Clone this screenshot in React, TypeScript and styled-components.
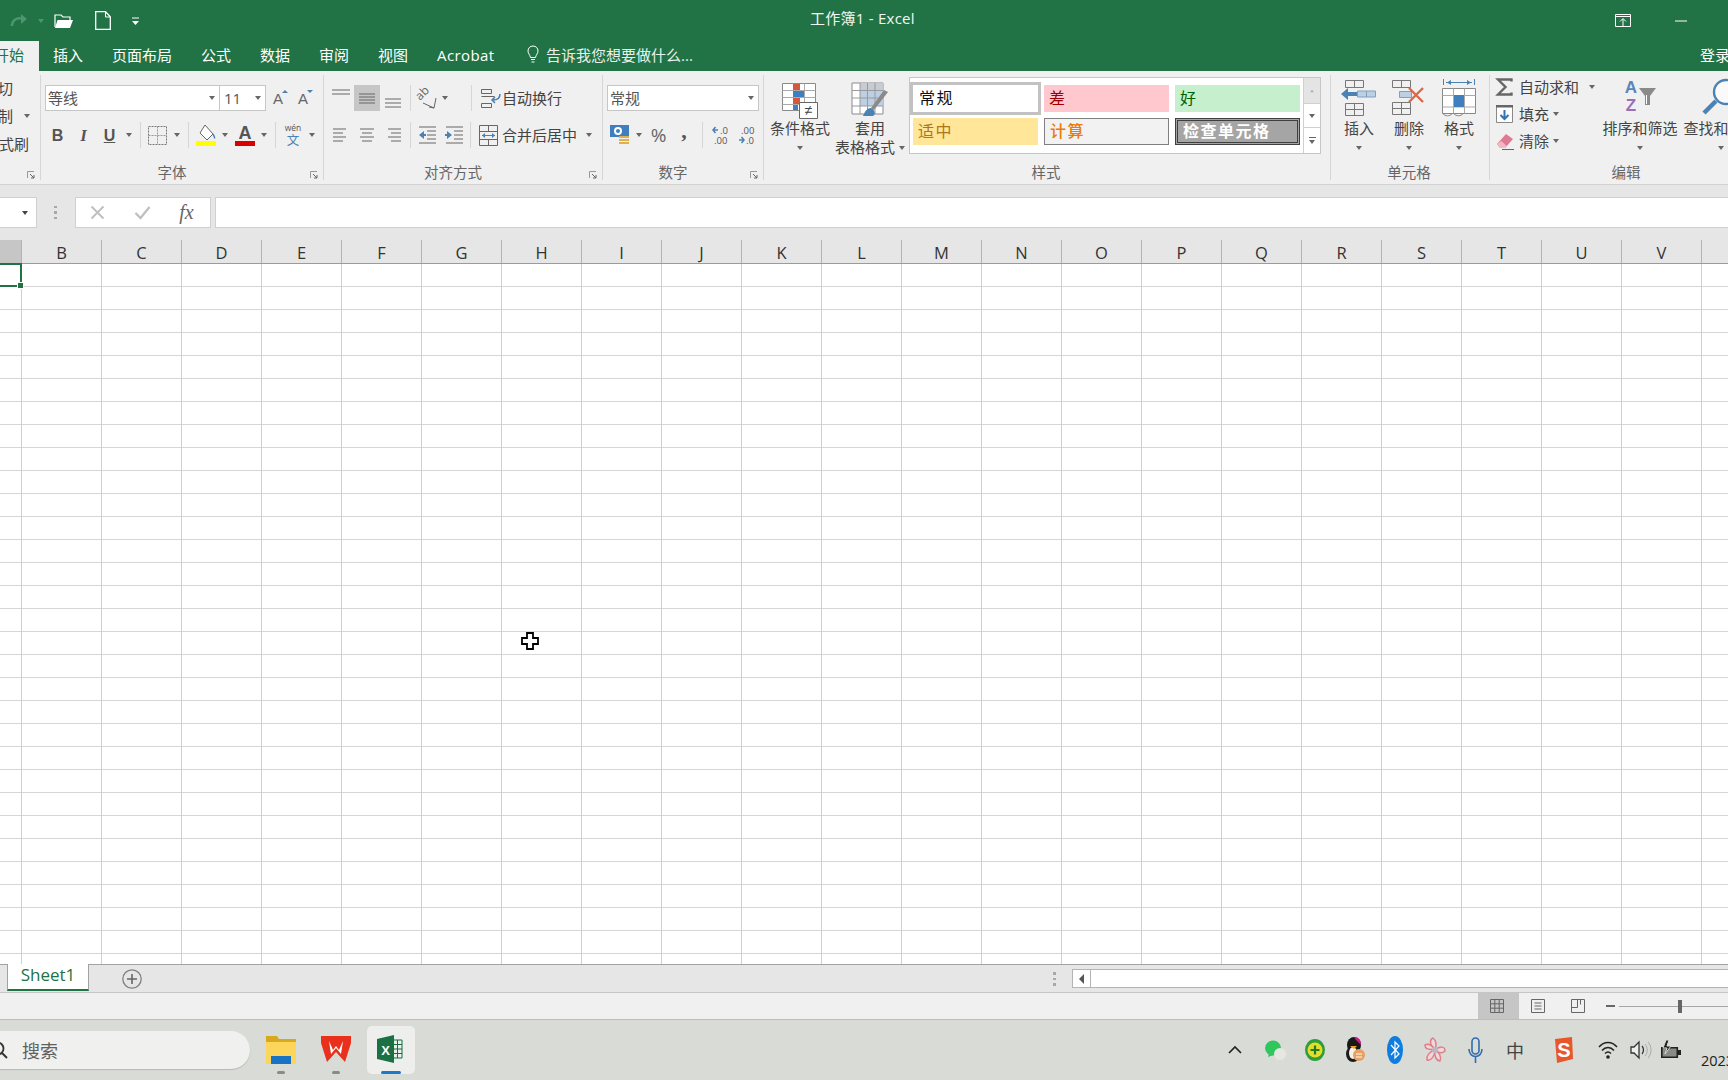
import React from "react";
import styled, { createGlobalStyle } from "styled-components";

const UI_FONT = `"Open Sans", "Noto Sans CJK SC", sans-serif`;
const GREEN = "#217346";
const BLUE = "#4a82b4";

const Global = createGlobalStyle`
  html, body { margin: 0; padding: 0; background: #fff; }
  body { width: 1728px; height: 1080px; overflow: hidden; font-family: ${UI_FONT}; }
`;

/* ── Shell ─────────────────────────────────────────────── */

const Page = styled.div`
  width: 1728px;
  height: 1080px;
  overflow: hidden;
  display: flex;
  flex-direction: column;
`;

const TitleBar = styled.div`
  height: 41px;
  flex: none;
  background: ${GREEN};
  display: flex;
  align-items: center;
  color: #fff;
  position: relative;
`;

const QuickSlot = styled.div<{ $w: number; $ml?: number }>`
  width: ${(p) => p.$w}px;
  margin-left: ${(p) => p.$ml ?? 0}px;
  flex: none;
  display: flex;
  justify-content: center;
  align-items: center;
`;

const WindowTitle = styled.div`
  position: absolute;
  left: 810px;
  top: 8px;
  font-size: 15px;
  line-height: 20px;
  letter-spacing: 0.25px;
  color: #f2f7f4;
`;

const TabStrip = styled.div`
  height: 30px;
  flex: none;
  background: ${GREEN};
  display: flex;
  align-items: stretch;
  color: #fff;
  font-size: 15px;
`;

const Tab = styled.div<{ $active?: boolean }>`
  flex: none;
  padding: 0 14.5px 3px;
  display: flex;
  align-items: center;
  background: ${(p) => (p.$active ? "#f0f0f0" : "transparent")};
  color: ${(p) => (p.$active ? GREEN : "#fff")};
  margin-left: ${(p) => (p.$active ? "-20.5px" : "0")};
`;

const LatinTab = styled(Tab)`
  letter-spacing: 0.4px;
`;

const TellMe = styled.div`
  display: flex;
  align-items: center;
  flex: none;
  gap: 7px;
  margin-left: 18px;
  padding-bottom: 3px;
  width: 165px;
  white-space: nowrap;
  color: #e8f1ec;
`;

const SignIn = styled.div`
  margin-left: 1008px;
  padding-bottom: 3px;
  display: flex;
  align-items: center;
  flex: none;
`;

/* ── Ribbon ─────────────────────────────────────────────── */

const Ribbon = styled.div`
  height: 114px;
  flex: none;
  background: #f0f0f0;
  border-bottom: 1px solid #d2d2d2;
  box-sizing: border-box;
  display: flex;
  padding-top: 4px;
  font-size: 15px;
  color: #444;
  line-height: 19px;
`;

const Group = styled.div<{ $w: number; $line?: boolean }>`
  width: ${(p) => p.$w}px;
  height: 105px;
  flex: none;
  box-sizing: border-box;
  position: relative;
  border-right: ${(p) => (p.$line === false ? "0" : "1px solid #d6d6d6")};
`;

const GroupBody = styled.div<{ $left?: number }>`
  height: 90px;
  padding-left: ${(p) => p.$left ?? 4}px;
  display: flex;
  box-sizing: border-box;
`;

const Stack = styled.div`
  padding-top: 10px;
  display: flex;
  flex-direction: column;
  gap: 11px;
`;

const Row = styled.div`
  height: 26px;
  display: flex;
  align-items: center;
`;

const GroupLabel = styled.div<{ $pad?: number }>`
  height: 16px;
  line-height: 16px;
  text-align: center;
  font-size: 14.5px;
  color: #666;
  padding-right: ${(p) => p.$pad ?? 0}px;
`;

const Launcher = styled.div`
  position: absolute;
  right: 5px;
  bottom: 1px;
  width: 8px;
  height: 8px;
  display: flex;
`;

const Slot = styled.div<{ $w: number; $on?: boolean; $ml?: number }>`
  width: ${(p) => p.$w}px;
  height: 26px;
  flex: none;
  margin-left: ${(p) => p.$ml ?? 0}px;
  display: flex;
  align-items: center;
  justify-content: center;
  background: ${(p) => (p.$on ? "#c6c6c6" : "transparent")};
  color: #444;
`;

const Sep = styled.div<{ $ml: number }>`
  width: 1px;
  height: 26px;
  flex: none;
  margin-left: ${(p) => p.$ml}px;
  background: #d6d6d6;
`;

const Caret = styled.span<{ $ml?: number; $dark?: boolean; $color?: string }>`
  display: inline-block;
  flex: none;
  width: 0;
  height: 0;
  margin-left: ${(p) => p.$ml ?? 0}px;
  border-left: 3.5px solid transparent;
  border-right: 3.5px solid transparent;
  border-top: 4px solid ${(p) => p.$color ?? (p.$dark ? "#444" : "#666")};
`;

const UpCaret = styled(Caret)`
  transform: rotate(180deg) scale(0.6);
`;

const Combo = styled.div<{ $w: number; $noLeft?: boolean }>`
  width: ${(p) => p.$w}px;
  height: 26px;
  flex: none;
  box-sizing: border-box;
  background: #fff;
  border: 1px solid #c6c6c6;
  border-left-width: ${(p) => (p.$noLeft ? 0 : 1)}px;
  display: flex;
  align-items: center;
  justify-content: space-between;
  padding: 0 4px 0 ${(p) => (p.$noLeft ? 4 : 2)}px;
  color: #555;
`;

const IconText = styled.span<{ $ml?: number }>`
  margin-left: ${(p) => p.$ml ?? 0}px;
  white-space: nowrap;
  flex: none;
  display: flex;
`;

const SmallColumn = styled.div`
  display: flex;
  flex-direction: column;
  gap: 3px;
  width: 112px;
  flex: none;
`;

const ClipColumn = styled.div`
  width: 40px;
  flex: none;
  margin-top: -1px;
  display: flex;
  flex-direction: column;
`;

const SmallRow = styled.div`
  height: 24px;
  display: flex;
  align-items: center;
  color: #444;
`;

const ClipText = styled.div<{ $ml: number }>`
  height: 28px;
  display: flex;
  align-items: center;
  margin-left: ${(p) => p.$ml}px;
  white-space: nowrap;
`;

const BigButton = styled.div<{ $w: number; $ml?: number }>`
  width: ${(p) => p.$w}px;
  margin-left: ${(p) => p.$ml ?? 0}px;
  flex: none;
  padding-top: 5px;
  display: flex;
  flex-direction: column;
  align-items: center;
`;

const BigIcon = styled.div`
  height: 36px;
  margin-bottom: 3px;
  display: flex;
  align-items: flex-start;
  justify-content: center;
`;

const BigLine = styled.div`
  height: 19px;
  display: flex;
  align-items: center;
  gap: 4px;
  white-space: nowrap;
`;

const Gallery = styled.div`
  width: 412px;
  height: 77px;
  margin: 2px 0 0 4px;
  flex: none;
  box-sizing: border-box;
  background: #fff;
  border: 1px solid #c6c6c6;
  display: flex;
`;

const GalleryGrid = styled.div`
  flex: none;
  padding: 7px 0 0 3px;
  display: grid;
  grid-template-columns: repeat(3, 125px);
  grid-auto-rows: 27px;
  gap: 6px;
`;

const StyleCell = styled.div<{ $bg: string; $fg: string; $weight?: number; $border?: string; $sel?: boolean }>`
  box-sizing: border-box;
  background: ${(p) => p.$bg};
  color: ${(p) => p.$fg};
  font-size: 16px;
  letter-spacing: 1.5px;
  font-weight: ${(p) => p.$weight ?? 400};
  display: flex;
  align-items: center;
  padding-left: ${(p) => (p.$sel ? 6 : 5)}px;
  border: ${(p) => p.$border ?? "0"};
  box-shadow: ${(p) => (p.$sel ? "0 0 0 3px #c2c2c2" : "none")};
  white-space: nowrap;
  overflow: hidden;
`;

const GalleryScroll = styled.div`
  margin-left: auto;
  width: 16px;
  flex: none;
  display: flex;
  flex-direction: column;
  border-left: 1px solid #d0d0d0;
`;

const ScrollCell = styled.div<{ $h: number; $off?: boolean }>`
  height: ${(p) => p.$h}px;
  flex: none;
  box-sizing: border-box;
  display: flex;
  flex-direction: column;
  align-items: center;
  justify-content: center;
  gap: 2px;
  background: ${(p) => (p.$off ? "#e4e4e4" : "#fff")};
  border-bottom: 1px solid #d0d0d0;
  &:last-child { border-bottom: 0; }
`;

const TinyBar = styled.span`
  width: 7px;
  height: 1px;
  background: #666;
`;

const Bold = styled.b<{ $font?: string; $size?: number; $italic?: boolean; $under?: boolean; $up?: number }>`
  font-family: ${(p) => p.$font ?? "Liberation Sans"};
  font-size: ${(p) => p.$size ?? 16}px;
  font-style: ${(p) => (p.$italic ? "italic" : "normal")};
  text-decoration: ${(p) => (p.$under ? "underline" : "none")};
  margin-top: ${(p) => -(p.$up ?? 0)}px;
  color: #555;
`;

const Percent = styled.span`
  font-size: 19px;
  color: #666;
`;

/* ── Formula bar and sheet ─────────────────────────────── */

const FormulaBand = styled.div`
  height: 55px;
  flex: none;
  background: #e6e6e6;
  display: flex;
  align-items: center;
`;

const FormulaBox = styled.div<{ $w?: number }>`
  height: 31px;
  box-sizing: border-box;
  width: ${(p) => (p.$w ? `${p.$w}px` : "auto")};
  flex: ${(p) => (p.$w ? "none" : "1")};
  background: #fff;
  border: 1px solid #d0d0d0;
  display: flex;
  align-items: center;
`;

const NameBox = styled(FormulaBox)`
  margin-left: -1px;
  justify-content: flex-end;
  padding-right: 8px;
`;

const FormulaInput = styled(FormulaBox)`
  margin-left: 4px;
  border-right: 0;
`;

const FxMark = styled.i`
  font-family: "Liberation Serif";
  font-size: 20px;
  color: #666;
`;

const GripDots = styled.div<{ $ml: number; $mr: number; $mt?: number }>`
  flex: none;
  margin: ${(p) => p.$mt ?? 0}px ${(p) => p.$mr}px 0 ${(p) => p.$ml}px;
  display: flex;
  flex-direction: column;
  gap: 3px;
  span {
    width: 2.5px;
    height: 2.5px;
    background: #a8a8a8;
  }
`;

const ColumnHeader = styled.div`
  height: 23px;
  flex: none;
  background: #e6e6e6;
  border-bottom: 1px solid #9b9b9b;
  display: flex;
`;

const ColHead = styled.div<{ $w: number; $sel?: boolean }>`
  width: ${(p) => p.$w}px;
  flex: none;
  box-sizing: border-box;
  border-right: 1px solid #b4b4b4;
  background: ${(p) => (p.$sel ? "#c6c6c6" : "transparent")};
  display: flex;
  align-items: center;
  justify-content: center;
  padding-top: 1px;
  font-size: 16.5px;
  color: #333;
`;

const SheetArea = styled.div`
  height: 700px;
  flex: none;
  position: relative;
  background-color: #fff;
  background-image:
    repeating-linear-gradient(to right, transparent 0 79px, #cfcfcf 79px 80px),
    repeating-linear-gradient(to bottom, transparent 0 22px, #d6d6d6 22px 23px);
  background-position: -58px 0, 0 0;
  background-size: calc(100% + 80px) 100%, 100% 100%;
  background-repeat: no-repeat;
`;

const CellCursor = styled.div`
  position: absolute;
  left: -3px;
  top: -1px;
  width: 25px;
  height: 24px;
  box-sizing: border-box;
  border: 2px solid ${GREEN};
  &::after {
    content: "";
    position: absolute;
    right: -4px;
    bottom: -4px;
    width: 5px;
    height: 5px;
    background: ${GREEN};
    border: 1px solid #fff;
  }
`;

const MouseCursor = styled.div`
  position: absolute;
  left: 521px;
  top: 368px;
  display: flex;
`;

/* ── Bottom bars ───────────────────────────────────────── */

const TabBar = styled.div`
  height: 29px;
  flex: none;
  box-sizing: border-box;
  background: #e6e6e6;
  border-top: 1px solid #a2a2a2;
  border-bottom: 1px solid #c6c6c6;
  display: flex;
  align-items: flex-start;
`;

const SheetTab = styled.div`
  margin-left: 7px;
  margin-top: -1px;
  width: 82px;
  height: 27px;
  flex: none;
  box-sizing: border-box;
  background: #fff;
  border: 1px solid #a2a2a2;
  border-top: 0;
  border-bottom: 2px solid ${GREEN};
  color: ${GREEN};
  font-size: 17px;
  line-height: 22px;
  text-align: center;
`;

const AddSheet = styled.div`
  margin: 4px 0 0 33px;
  flex: none;
  display: flex;
`;

const ScrollTrack = styled.div`
  margin: 4px 0 0 16px;
  flex: 1;
  height: 19px;
  box-sizing: border-box;
  background: #fff;
  border: 1px solid #b4b4b4;
  border-right: 0;
  display: flex;
`;

const ScrollLeft = styled.div`
  width: 18px;
  flex: none;
  box-sizing: border-box;
  border-right: 1px solid #b4b4b4;
  display: flex;
  align-items: center;
  justify-content: center;
  &::before {
    content: "";
    border-top: 5px solid transparent;
    border-bottom: 5px solid transparent;
    border-right: 5px solid #555;
  }
`;

const StatusBar = styled.div`
  height: 27px;
  flex: none;
  box-sizing: border-box;
  background: #f0f0f0;
  border-bottom: 1px solid #bdbdbd;
  display: flex;
  padding-left: 1478px;
`;

const ViewButton = styled.div<{ $on?: boolean }>`
  width: 40.5px;
  padding-right: 2px;
  box-sizing: border-box;
  flex: none;
  display: flex;
  align-items: center;
  justify-content: center;
  background: ${(p) => (p.$on ? "#c6c6c6" : "transparent")};
`;

const ZoomMinus = styled.div`
  width: 9px;
  height: 2px;
  flex: none;
  background: #666;
  align-self: center;
  margin-left: 6px;
`;

const ZoomTrack = styled.div`
  flex: 1;
  height: 1px;
  align-self: center;
  margin-left: 4px;
  background: #a6a6a6;
  position: relative;
`;

const ZoomThumb = styled.div`
  position: absolute;
  left: 59px;
  top: -6px;
  width: 4px;
  height: 13px;
  background: #666;
`;

const Taskbar = styled.div`
  height: 60px;
  flex: none;
  background: #d9dbd6;
  display: flex;
  align-items: flex-start;
  padding-top: 6px;
  box-sizing: border-box;
`;

const SearchPill = styled.div`
  margin: 5px 0 0 -20px;
  width: 270px;
  height: 38px;
  flex: none;
  box-sizing: border-box;
  background: #f0f0ee;
  border-radius: 19px;
  box-shadow: 0 1px 1px #b8b8b4;
  display: flex;
  align-items: center;
  padding-left: 10px;
  font-size: 18px;
  color: #5f5f5f;
  gap: 14px;
`;

const DockSlot = styled.div<{ $on?: boolean }>`
  width: 48px;
  height: 48px;
  flex: none;
  margin-left: 7px;
  border-radius: 5px;
  background: ${(p) => (p.$on ? "#eeeeec" : "transparent")};
  display: flex;
  align-items: center;
  justify-content: center;
  position: relative;
  padding-bottom: 2px;
  box-sizing: border-box;
`;

const DockMark = styled.span<{ $on?: boolean }>`
  position: absolute;
  left: 50%;
  bottom: 0;
  width: ${(p) => (p.$on ? 20 : 8)}px;
  height: 3.5px;
  margin-left: ${(p) => (p.$on ? -10 : -4)}px;
  border-radius: 2px;
  background: ${(p) => (p.$on ? "#1c78c8" : "#8a8a8a")};
`;

const Tray = styled.div`
  margin-left: 800px;
  display: flex;
  flex: none;
  height: 48px;
  align-items: center;
`;

const TraySlot = styled.div<{ $w?: number }>`
  width: ${(p) => p.$w ?? 40}px;
  flex: none;
  display: flex;
  align-items: center;
  justify-content: center;
`;

const ImeMark = styled.span`
  font-size: 18px;
  color: #444;
`;

const ClockDate = styled.div`
  margin: 20px 0 0 14px;
  flex: none;
  font-size: 14.5px;
  color: #222;
  white-space: nowrap;
`;

/* ── Icons ─────────────────────────────────────────────── */

const SvgBox = styled.svg`
  flex: none;
  overflow: visible;
`;

const Svg = ({ w, h, children }: { w: number; h: number; children: React.ReactNode }) => (
  <SvgBox width={w} height={h} viewBox={`0 0 ${w} ${h}`} fill="none">
    {children}
  </SvgBox>
);

const Lines = ({ rows }: { rows: [number, number, number][] }) => (
  <Svg w={20} h={20}>
    {rows.map(([x1, x2, y], i) => (
      <path key={i} d={`M${x1} ${y}H${x2}`} stroke="#666" />
    ))}
  </Svg>
);

const LauncherIcon = () => (
  <Launcher>
    <Svg w={8} h={8}>
      <path d="M.5 7V.5H7" stroke="#999" />
      <path d="M3 3l4 4M7 4v3H4" stroke="#666" />
    </Svg>
  </Launcher>
);

const CondIcon = () => (
  <Svg w={38} h={36}>
    <path d="M1.500 3.500h33v27h-33z" stroke="#8a8a8a" fill="#fff" />
    <path d="M12.500 3.500v27M23.500 3.500v27M1.500 10.500h33M1.500 17.500h33M1.500 24.500h33" stroke="#aaa" />
    <path d="M12 4h7v6h-7zM12 18h7v6h-7z" fill="#d6583c" />
    <path d="M12 11h11v6H12zM12 25h5v5h-5z" fill="#3f7fbf" />
    <path d="M18.500 22.500h18v16h-18z" stroke="#666" fill="#fff" />
    <text x="27.500" y="35" fontSize="14" fontFamily="Liberation Sans" fill="#444" textAnchor="middle" fontStyle="italic">≠</text>
  </Svg>
);

const TableIcon = () => (
  <Svg w={38} h={36}>
    <path d="M1 3h31v31H1z" fill="#fff" stroke="#8a8a8a" />
    <path d="M9 3h23v7H9z" fill="#c5ccd4" />
    <path d="M9 10h23v16H9z" fill="#bccfe3" />
    <path d="M9 3v31M16.500 3v31M24 3v31M1 10.500h31M1 18h31M1 26h31" stroke="#9a9a9a" />
    <path d="M37 12L23 30l-3-2L33 10z" fill="#8a8a8a" />
    <path d="M20 28c-4 0-6 3-8 8h10c3-2 2-6-2-8z" fill={BLUE} />
  </Svg>
);

const InsertIcon = () => (
  <Svg w={38} h={36}>
    <path d="M5.500.500h18v7h-18zM14.500.500v7M5.500 23.500h18v12h-18zM14.500 23.500v12M5.500 29.500h18" stroke="#777" />
    <path d="M17.500 11h18v6h-18z" fill="#bcd0e4" stroke="#7f9fc0" />
    <path d="M26.500 11v6" stroke="#7f9fc0" />
    <path d="M1 14l7-6v4h9v4H8v4z" fill={BLUE} />
  </Svg>
);

const DeleteIcon = () => (
  <Svg w={38} h={36}>
    <path d="M2.500.500h18v7h-18zM11.500.500v7M2.500 22.500h18v12h-18zM11.500 22.500v12M2.500 28.500h18" stroke="#777" />
    <path d="M9.500 11.500h12v6h-12z" fill="#bcd0e4" stroke="#7f9fc0" />
    <path d="M19 8l14 14M33 8L19 22" stroke="#d9694a" strokeWidth="2.400" />
  </Svg>
);

const FormatIcon = () => (
  <Svg w={38} h={38}>
    <path d="M3.500-1v6M34.500-1v6M6 2.500h26" stroke={BLUE} />
    <path d="M7 2.500l4-2.500v5zM31 2.500l-4-2.500v5z" fill={BLUE} />
    <path d="M2.500 8.500h33v25h-33z" fill="#fff" stroke="#888" />
    <path d="M13.500 8.500v25M24.500 8.500v25M2.500 15.500h33M2.500 27h33" stroke="#aaa" />
    <path d="M14 15h10v12H14z" fill="#3f7fbf" />
    <path d="M2.500 33.500c3 3 7 3 10 0M13.500 33.500c3 3 7 3 10 0" stroke="#888" />
  </Svg>
);

const SortIcon = () => (
  <Svg w={38} h={36}>
    <text x="10" y="13" fontSize="17" fontWeight="700" fontFamily="Liberation Sans" fill="#5a86bd" textAnchor="middle">A</text>
    <text x="10" y="31" fontSize="17" fontWeight="700" fontFamily="Liberation Sans" fill="#9a6fb8" textAnchor="middle">Z</text>
    <path d="M18 8h17l-6 8v9h-5v-9z" fill="#8a8a8a" />
    <path d="M25.500 15v9" stroke="#fff" />
  </Svg>
);

const FindIcon = () => (
  <Svg w={38} h={36}>
    <circle cx="24" cy="12" r="12" fill="#fafafa" stroke={BLUE} strokeWidth="2.400" />
    <path d="M2 33l12-12" stroke={BLUE} strokeWidth="4.500" />
  </Svg>
);

const BorderIcon = () => (
  <Svg w={19} h={19}>
    <path d="M.5.500h18v18H.5z" stroke="#777" strokeDasharray="2 1" />
    <path d="M9.500.500v18M.5 9.500h18" stroke="#999" strokeDasharray="2 1" />
  </Svg>
);

/* ── Data ──────────────────────────────────────────────── */

const COLUMNS = "BCDEFGHIJKLMNOPQRSTUVW".split("");

const BigCaretLine = () => (
  <BigLine>
    <Caret />
  </BigLine>
);

export default function App() {
  return (
    <Page>
      <Global />
      <TitleBar>
        <QuickSlot $w={38}>
          <Svg w={20} h={18}>
            <path d="M3 14c0-6 5-9 12-7" stroke="#4f9470" strokeWidth="2.500" />
            <path d="M12 2l6 5-6 5z" fill="#4f9470" />
          </Svg>
        </QuickSlot>
        <QuickSlot $w={5}>
          <Caret $color="#4f9470" />
        </QuickSlot>
        <QuickSlot $w={42}>
          <Svg w={20} h={17}>
            <path d="M1 15V3h6l2 2h7v3" stroke="#fff" strokeWidth="1.200" />
            <path d="M3.500 8H19l-3 8H1z" fill="#fff" />
          </Svg>
        </QuickSlot>
        <QuickSlot $w={35}>
          <Svg w={16} h={19}>
            <path d="M.7.700h9.800l4.800 5v12.600H.7z" stroke="#fff" strokeWidth="1.300" />
            <path d="M10.500 1v5h4.800" stroke="#fff" />
          </Svg>
        </QuickSlot>
        <QuickSlot $w={30}>
          <Svg w={7} h={8}>
            <path d="M0 1h7" stroke="#fff" />
            <path d="M0 4h7L3.500 8z" fill="#fff" />
          </Svg>
        </QuickSlot>
        <QuickSlot $w={16} $ml={1465}>
          <Svg w={16} h={13}>
            <path d="M.5.500h15v12H.5zM.5 2.500h15" stroke="#fff" />
            <path d="M8 12V5M5 7.500L8 4.500l3 3" stroke="#fff" />
          </Svg>
        </QuickSlot>
        <QuickSlot $w={12} $ml={44}>
          <Svg w={12} h={2}>
            <path d="M0 1h12" stroke="#fff" />
          </Svg>
        </QuickSlot>
        <WindowTitle>工作簿1 - Excel</WindowTitle>
      </TitleBar>

      <TabStrip>
        <Tab $active>开始</Tab>
        <Tab>插入</Tab>
        <Tab>页面布局</Tab>
        <Tab>公式</Tab>
        <Tab>数据</Tab>
        <Tab>审阅</Tab>
        <Tab>视图</Tab>
        <LatinTab>Acrobat</LatinTab>
        <TellMe>
          <Svg w={12} h={19}>
            <path d="M6 1C3 1 1 3.200 1 6c0 2.500 2 3.800 2.500 6.500h5C9 9.800 11 8.500 11 6c0-2.800-2-5-5-5z" stroke="#fff" />
            <path d="M4 14.500h4M4.500 17h3" stroke="#fff" />
          </Svg>
          告诉我您想要做什么...
        </TellMe>
        <SignIn>登录</SignIn>
      </TabStrip>

      <Ribbon>
        <Group $w={41}>
          <GroupBody $left={0}>
            <ClipColumn>
              <ClipText $ml={-2}>切</ClipText>
              <ClipText $ml={-2}>
                制<Caret $ml={11} />
              </ClipText>
              <ClipText $ml={-16}>格式刷</ClipText>
            </ClipColumn>
          </GroupBody>
          <LauncherIcon />
        </Group>

        <Group $w={283}>
          <GroupBody>
            <Stack>
              <Row>
                <Combo $w={175}>
                  等线
                  <Caret />
                </Combo>
                <Combo $w={46} $noLeft>
                  11
                  <Caret />
                </Combo>
                <Slot $w={28}>
                  <Svg w={16} h={18}>
                    <text x="6" y="15" fontSize="15" fontFamily="Liberation Sans" fill="#666" textAnchor="middle">A</text>
                    <path d="M10 4l3-3 3 3z" fill={BLUE} />
                  </Svg>
                </Slot>
                <Slot $w={22}>
                  <Svg w={16} h={18}>
                    <text x="6" y="15" fontSize="15" fontFamily="Liberation Sans" fill="#666" textAnchor="middle">A</text>
                    <path d="M10 1l3 3 3-3z" fill={BLUE} />
                  </Svg>
                </Slot>
              </Row>
              <Row>
                <Slot $w={25}>
                  <Bold>B</Bold>
                </Slot>
                <Slot $w={27}>
                  <Bold $font="Liberation Serif" $size={17} $italic>I</Bold>
                </Slot>
                <Slot $w={25}>
                  <Bold $under>U</Bold>
                </Slot>
                <Slot $w={14}>
                  <Caret />
                </Slot>
                <Sep $ml={4} />
                <Slot $w={32}>
                  <BorderIcon />
                </Slot>
                <Slot $w={8}>
                  <Caret />
                </Slot>
                <Sep $ml={7} />
                <Slot $w={33}>
                  <Svg w={20} h={23}>
                    <path d="M9 1l8 9-6 6-7-7z" stroke="#666" fill="#fff" />
                    <path d="M17 10c1 2 2 3 1.500 4.500" stroke={BLUE} strokeWidth="1.500" />
                    <path d="M0 17h20v5H0z" fill="#ffff00" />
                  </Svg>
                </Slot>
                <Slot $w={6}>
                  <Caret />
                </Slot>
                <Slot $w={34}>
                  <Svg w={20} h={23}>
                    <text x="10" y="15" fontSize="18" fontWeight="700" fontFamily="Liberation Sans" fill="#555" textAnchor="middle">A</text>
                    <path d="M0 17h20v5H0z" fill="#d90000" />
                  </Svg>
                </Slot>
                <Slot $w={4}>
                  <Caret />
                </Slot>
                <Sep $ml={9} />
                <Slot $w={33}>
                  <Svg w={18} h={22}>
                    <text x="9" y="7" fontSize="8.500" fontFamily="Open Sans" fill="#555" textAnchor="middle">wén</text>
                    <text x="9" y="21" fontSize="12.500" fontFamily="Noto Sans CJK SC" fill={BLUE} textAnchor="middle">文</text>
                  </Svg>
                </Slot>
                <Slot $w={6}>
                  <Caret />
                </Slot>
              </Row>
            </Stack>
          </GroupBody>
          <GroupLabel $pad={20}>字体</GroupLabel>
          <LauncherIcon />
        </Group>

        <Group $w={279}>
          <GroupBody>
            <Stack>
              <Row>
                <Slot $w={26}>
                  <Lines rows={[[1, 19, 2], [1, 19, 6]]} />
                </Slot>
                <Slot $w={26} $on>
                  <Lines rows={[[2, 18, 6], [2, 18, 9], [2, 18, 12], [2, 18, 15]]} />
                </Slot>
                <Slot $w={26}>
                  <Lines rows={[[2, 18, 11], [2, 18, 15], [2, 18, 19]]} />
                </Slot>
                <Sep $ml={4} />
                <Slot $w={32}>
                  <Svg w={20} h={20}>
                    <text x="0" y="0" transform="translate(3 13) rotate(-45)" fontSize="12" fontFamily="Open Sans" fill="#666">ab</text>
                    <path d="M6 15l11 5M19 10l-2 10-5-1" stroke="#666" />
                  </Svg>
                </Slot>
                <Slot $w={4}>
                  <Caret />
                </Slot>
                <Sep $ml={24} />
                <IconText $ml={9}>
                  <Svg w={20} h={19}>
                    <path d="M.5.500h10v4H.5zM.5 14.500h10v4H.5zM.5 7.500h13" stroke="#666" />
                    <path d="M19 5c0 5-3 6-7 6M14 8l-3 3 3 3" stroke={BLUE} strokeWidth="1.500" />
                  </Svg>
                </IconText>
                <IconText $ml={1}>自动换行</IconText>
              </Row>
              <Row>
                <Slot $w={26}>
                  <Lines rows={[[2, 15, 4], [2, 12, 8], [2, 15, 12], [2, 12, 16]]} />
                </Slot>
                <Slot $w={26}>
                  <Lines rows={[[3, 17, 4], [5, 15, 8], [3, 17, 12], [5, 15, 16]]} />
                </Slot>
                <Slot $w={26}>
                  <Lines rows={[[5, 18, 4], [8, 18, 8], [5, 18, 12], [8, 18, 16]]} />
                </Slot>
                <Sep $ml={4} />
                <Slot $w={30} $ml={1}>
                  <Svg w={19} h={19}>
                    <path d="M1 1h17M9 5h9M9 9h9M9 13h9M1 17h17" stroke="#666" />
                    <path d="M1 9l5-4v3h2v2H6v3z" fill={BLUE} />
                  </Svg>
                </Slot>
                <Slot $w={24}>
                  <Svg w={19} h={19}>
                    <path d="M1 1h17M9 5h9M9 9h9M9 13h9M1 17h17" stroke="#666" />
                    <path d="M7 9L2 5v3H0v2h2v3z" fill={BLUE} />
                  </Svg>
                </Slot>
                <Sep $ml={4} />
                <IconText $ml={8}>
                  <Svg w={20} h={21}>
                    <path d="M.5.500h18v20H.5zM.5 6.500h18M.5 14.500h18M9.500.500v6M9.500 14.500v6" stroke="#666" />
                    <path d="M3 10.500h13" stroke={BLUE} />
                    <path d="M6 8l-3 2.500L6 13zM13 8l3 2.500L13 13z" fill={BLUE} />
                  </Svg>
                </IconText>
                <IconText $ml={3}>合并后居中</IconText>
                <Caret $ml={9} />
              </Row>
            </Stack>
          </GroupBody>
          <GroupLabel $pad={20}>对齐方式</GroupLabel>
          <LauncherIcon />
        </Group>

        <Group $w={161}>
          <GroupBody>
            <Stack>
              <Row>
                <Combo $w={152}>
                  常规
                  <Caret />
                </Combo>
              </Row>
              <Row>
                <Slot $w={25}>
                  <Svg w={20} h={20}>
                    <path d="M0 0h19v12H0z" fill="#3f7fbf" />
                    <circle cx="8" cy="6" r="4" fill="#fff" />
                    <circle cx="8" cy="6" r="2" fill="#3f7fbf" />
                    <path d="M9 12h10M9 15h10M9 18h10" stroke="#e0b050" strokeWidth="2" />
                  </Svg>
                </Slot>
                <Slot $w={14}>
                  <Caret />
                </Slot>
                <Slot $w={25}>
                  <Percent>%</Percent>
                </Slot>
                <Slot $w={26}>
                  <Bold $font="Liberation Serif" $size={22} $up={10}>,</Bold>
                </Slot>
                <Sep $ml={5} />
                <Slot $w={34}>
                  <Svg w={17} h={20}>
                    <path d="M6 5H1m2.500-3L1 5l2.500 3" stroke={BLUE} strokeWidth="1.500" />
                    <text x="8" y="9" fontSize="9.500" fontFamily="Open Sans" fill="#555">.0</text>
                    <text x="2" y="19" fontSize="9.500" fontFamily="Open Sans" fill="#555">.00</text>
                  </Svg>
                </Slot>
                <Slot $w={18}>
                  <Svg w={17} h={20}>
                    <text x="3" y="9" fontSize="9.500" fontFamily="Open Sans" fill="#555">.00</text>
                    <path d="M1 15h5m-2.500-3L6 15l-2.500 3" stroke={BLUE} strokeWidth="1.500" />
                    <text x="8" y="19" fontSize="9.500" fontFamily="Open Sans" fill="#555">.0</text>
                  </Svg>
                </Slot>
              </Row>
            </Stack>
          </GroupBody>
          <GroupLabel $pad={20}>数字</GroupLabel>
          <LauncherIcon />
        </Group>

        <Group $w={567}>
          <GroupBody $left={1}>
            <BigButton $w={70}>
              <BigIcon>
                <CondIcon />
              </BigIcon>
              <BigLine>条件格式</BigLine>
              <BigCaretLine />
            </BigButton>
            <BigButton $w={70}>
              <BigIcon>
                <TableIcon />
              </BigIcon>
              <BigLine>套用</BigLine>
              <BigLine>
                表格格式
                <Caret />
              </BigLine>
            </BigButton>
            <Gallery>
              <GalleryGrid>
                <StyleCell $bg="#fff" $fg="#111" $sel>常规</StyleCell>
                <StyleCell $bg="#ffc7ce" $fg="#9c0006">差</StyleCell>
                <StyleCell $bg="#c6efce" $fg="#006100">好</StyleCell>
                <StyleCell $bg="#ffe699" $fg="#b0761a">适中</StyleCell>
                <StyleCell $bg="#f2f2f2" $fg="#ec7a06" $weight={500} $border="1px solid #7f7f7f">计算</StyleCell>
                <StyleCell $bg="#a5a5a5" $fg="#fff" $weight={700} $border="3px double #3f3f3f">检查单元格</StyleCell>
              </GalleryGrid>
              <GalleryScroll>
                <ScrollCell $h={26} $off>
                  <UpCaret $color="#aaa" />
                </ScrollCell>
                <ScrollCell $h={24}>
                  <Caret />
                </ScrollCell>
                <ScrollCell $h={25}>
                  <TinyBar />
                  <Caret />
                </ScrollCell>
              </GalleryScroll>
            </Gallery>
          </GroupBody>
          <GroupLabel $pad={2}>样式</GroupLabel>
        </Group>

        <Group $w={159}>
          <GroupBody $left={3}>
            <BigButton $w={50}>
              <BigIcon>
                <InsertIcon />
              </BigIcon>
              <BigLine>插入</BigLine>
              <BigCaretLine />
            </BigButton>
            <BigButton $w={50}>
              <BigIcon>
                <DeleteIcon />
              </BigIcon>
              <BigLine>删除</BigLine>
              <BigCaretLine />
            </BigButton>
            <BigButton $w={50}>
              <BigIcon>
                <FormatIcon />
              </BigIcon>
              <BigLine>格式</BigLine>
              <BigCaretLine />
            </BigButton>
          </GroupBody>
          <GroupLabel $pad={2}>单元格</GroupLabel>
        </Group>

        <Group $w={290} $line={false}>
          <GroupBody $left={0}>
            <SmallColumn>
              <SmallRow>
                <Slot $w={29}>
                  <Svg w={18} h={18}>
                    <path d="M15.500 3.500V1.500H2l7.500 7.500L2 16.500h13.500v-2" stroke="#666" strokeWidth="2.400" />
                  </Svg>
                </Slot>
                <IconText>自动求和</IconText>
                <Caret $ml={10} />
              </SmallRow>
              <SmallRow>
                <Slot $w={29}>
                  <Svg w={17} h={18}>
                    <path d="M.5.500h16v17H.5z" stroke="#888" fill="#fff" />
                    <path d="M0 0h17v2.500H0z" fill="#666" />
                    <path d="M8.500 5v9M4.500 10l4 4 4-4" stroke="#2f75b5" strokeWidth="2" />
                  </Svg>
                </Slot>
                <IconText>填充</IconText>
                <Caret $ml={4} />
              </SmallRow>
              <SmallRow>
                <Slot $w={29}>
                  <Svg w={18} h={17}>
                    <path d="M1 11l9-10 7 5-8 9H4z" fill="#e07a94" />
                    <path d="M1 11l3 4h5l1.500-2-5-5z" fill="#f3b7c4" />
                    <path d="M6 16.500h12" stroke="#666" />
                  </Svg>
                </Slot>
                <IconText>清除</IconText>
                <Caret $ml={4} />
              </SmallRow>
            </SmallColumn>
            <BigButton $w={78} $ml={-1}>
              <BigIcon>
                <SortIcon />
              </BigIcon>
              <BigLine>排序和筛选</BigLine>
              <BigCaretLine />
            </BigButton>
            <BigButton $w={78} $ml={3}>
              <BigIcon>
                <FindIcon />
              </BigIcon>
              <BigLine>查找和选择</BigLine>
              <BigCaretLine />
            </BigButton>
          </GroupBody>
          <GroupLabel $pad={18}>编辑</GroupLabel>
        </Group>
      </Ribbon>

      <FormulaBand>
        <NameBox $w={38}>
          <Caret $dark />
        </NameBox>
        <GripDots $ml={17} $mr={18}>
          <span />
          <span />
          <span />
        </GripDots>
        <FormulaBox $w={136}>
          <QuickSlot $w={44}>
            <Svg w={15} h={15}>
              <path d="M1.500 1.500l12 12M13.500 1.500l-12 12" stroke="#c0c0c0" strokeWidth="2" />
            </Svg>
          </QuickSlot>
          <QuickSlot $w={46}>
            <Svg w={17} h={15}>
              <path d="M1.500 8l5 5 9-11" stroke="#c0c0c0" strokeWidth="2.400" />
            </Svg>
          </QuickSlot>
          <QuickSlot $w={42}>
            <FxMark>fx</FxMark>
          </QuickSlot>
        </FormulaBox>
        <FormulaInput />
      </FormulaBand>

      <ColumnHeader>
        <ColHead $w={22} $sel />
        {COLUMNS.map((c) => (
          <ColHead key={c} $w={80}>
            {c}
          </ColHead>
        ))}
      </ColumnHeader>

      <SheetArea>
        <CellCursor />
        <MouseCursor>
          <Svg w={18} h={18}>
            <path d="M6 1h6v5h5v6h-5v5H6v-5H1V6h5z" fill="#fff" stroke="#000" strokeWidth="1.800" />
          </Svg>
        </MouseCursor>
      </SheetArea>

      <TabBar>
        <SheetTab>Sheet1</SheetTab>
        <AddSheet>
          <Svg w={20} h={20}>
            <circle cx="10" cy="10" r="9.200" stroke="#808080" strokeWidth="1.300" />
            <path d="M10 5v10M5 10h10" stroke="#666" strokeWidth="1.600" />
          </Svg>
        </AddSheet>
        <GripDots $ml={911} $mr={0} $mt={7}>
          <span />
          <span />
          <span />
        </GripDots>
        <ScrollTrack>
          <ScrollLeft />
        </ScrollTrack>
      </TabBar>

      <StatusBar>
        <ViewButton $on>
          <Svg w={14} h={14}>
            <path d="M.5.500h13v13H.5zM4.800.500v13M9.200.500v13M.5 4.800h13M.5 9.200h13" stroke="#666" />
          </Svg>
        </ViewButton>
        <ViewButton>
          <Svg w={14} h={14}>
            <path d="M.5.500h13v13H.5zM3.500 4h7M3.500 7h7M3.500 10h7" stroke="#666" />
          </Svg>
        </ViewButton>
        <ViewButton>
          <Svg w={14} h={14}>
            <path d="M.5.500h13v13H.5zM.5 8.500h6v-8M9.500.500v5" stroke="#666" />
          </Svg>
        </ViewButton>
        <ZoomMinus />
        <ZoomTrack>
          <ZoomThumb />
        </ZoomTrack>
      </StatusBar>

      <Taskbar>
        <SearchPill>
          <Svg w={18} h={18}>
            <circle cx="7.500" cy="7.500" r="6" stroke="#333" strokeWidth="1.800" />
            <path d="M12 12l5 5" stroke="#333" strokeWidth="2" />
          </Svg>
          搜索
        </SearchPill>
        <DockSlot>
          <Svg w={30} h={29}>
            <path d="M0 1h11l2 3h17v25H0z" fill="#d8a91e" />
            <path d="M0 7h30v22H0z" fill="#fcd65a" />
            <path d="M5 21h20v8H5z" fill="#1773c4" />
          </Svg>
          <DockMark />
        </DockSlot>
        <DockSlot>
          <Svg w={30} h={27}>
            <path d="M0 0h30v7l-6 19-9-10-9 10L0 7z" fill="#e8301c" />
            <path d="M8 5l4 9 3-4 3 4 4-9-2 13-5-6-5 6z" fill="#fff" />
          </Svg>
          <DockMark />
        </DockSlot>
        <DockSlot $on>
          <Svg w={28} h={28}>
            <path d="M14 0h12v28H14z" fill="#e9f1ec" />
            <path d="M16 5h9v18h-9zM16 9.500h9M16 14h9M16 18.500h9M20.500 5v18" stroke="#1a6b3f" />
            <path d="M0 4l17-4v28L0 24z" fill="#1b7143" />
            <text x="8.500" y="20" fontSize="13" fontWeight="700" fontFamily="Liberation Sans" fill="#fff" textAnchor="middle">X</text>
          </Svg>
          <DockMark $on />
        </DockSlot>
        <Tray>
          <TraySlot>
            <Svg w={14} h={8}>
              <path d="M1 7l6-6 6 6" stroke="#222" strokeWidth="1.600" />
            </Svg>
          </TraySlot>
          <TraySlot>
            <Svg w={21} h={20}>
              <ellipse cx="8" cy="8" rx="8" ry="7.500" fill="#2fc75d" />
              <path d="M4 13l-1 4 5-2z" fill="#2fc75d" />
              <circle cx="15" cy="14" r="6" fill="#e6e6e2" />
            </Svg>
          </TraySlot>
          <TraySlot>
            <Svg w={20} h={22}>
              <ellipse cx="10" cy="11" rx="10" ry="11" fill="#2f9e3a" />
              <circle cx="10" cy="11" r="7.500" fill="#e6dc2a" />
              <path d="M10 6.500v9M5.500 11h9" stroke="#1c7c2c" strokeWidth="2.200" />
            </Svg>
          </TraySlot>
          <TraySlot>
            <Svg w={20} h={26}>
              <ellipse cx="9" cy="8" rx="7" ry="8" fill="#181818" />
              <path d="M9 0c5 0 7 3 7 8l-5-5z" fill="#d4178c" />
              <ellipse cx="8" cy="17" rx="7" ry="8" fill="#1c1c1c" />
              <ellipse cx="8" cy="16" rx="4" ry="6" fill="#f6f0e8" />
              <path d="M5 9h7l-3 3z" fill="#f0a21e" />
              <circle cx="14" cy="18" r="6" fill="#e8a060" />
              <path d="M11 17h6M11 20h6" stroke="#fff" />
            </Svg>
          </TraySlot>
          <TraySlot>
            <Svg w={16} h={28}>
              <ellipse cx="8" cy="14" rx="8" ry="14" fill="#0d7de0" />
              <path d="M4 9l8 9-4 4V6l4 4-8 9" stroke="#fff" strokeWidth="1.200" />
            </Svg>
          </TraySlot>
          <TraySlot>
            <Svg w={22} h={26}>
              <g stroke="#dd7f8a" strokeWidth="1.500" fill="#f4d6d6">
                <path d="M11 13C6 9 5 3 9 1c3 2 4 7 2 12z" />
                <path d="M11 13c5-4 10-4 10 1-3 3-7 2-10-1z" />
                <path d="M11 13c0 6-4 11-8 10-1-4 3-9 8-10z" />
                <path d="M11 13C6 12 1 13 1 8c4-2 8 1 10 5z" />
                <path d="M11 13c4 2 7 7 5 11-4 0-6-6-5-11z" />
              </g>
              <circle cx="11" cy="13" r="3" fill="#b8b8c8" />
            </Svg>
          </TraySlot>
          <TraySlot>
            <Svg w={15} h={27}>
              <rect x="4" y="1" width="7" height="16" rx="3.500" stroke="#2f6db0" strokeWidth="1.600" />
              <path d="M1 12c0 10 13 10 13 0M7.500 20v6" stroke="#2f6db0" strokeWidth="1.600" />
            </Svg>
          </TraySlot>
          <TraySlot>
            <ImeMark>中</ImeMark>
          </TraySlot>
          <TraySlot $w={56}>
            <Svg w={20} h={26}>
              <path d="M2 2l17-2 1 22-16 4z" fill="#e8562a" />
              <text x="11" y="20" fontSize="20" fontWeight="700" fontFamily="Liberation Sans" fill="#fff" textAnchor="middle">S</text>
            </Svg>
          </TraySlot>
          <TraySlot $w={34}>
            <Svg w={20} h={18}>
              <path d="M1 6c5-6 13-6 18 0M4 9.500c3.500-4 8.500-4 12 0M7 12.500c2-2 4-2 6 0" stroke="#222" strokeWidth="1.500" />
              <circle cx="10" cy="16" r="1.800" fill="#222" />
            </Svg>
          </TraySlot>
          <TraySlot $w={30}>
            <Svg w={20} h={18}>
              <path d="M1 6h3l5-5v16l-5-5H1z" stroke="#333" strokeWidth="1.300" fill="#eee" />
              <path d="M12 5c2 2 2 6 0 8" stroke="#333" strokeWidth="1.300" />
              <path d="M15 3c3 3 3 9 0 12M18 1c4 4 4 12 0 16" stroke="#aaa" />
            </Svg>
          </TraySlot>
          <TraySlot $w={32}>
            <Svg w={22} h={20}>
              <path d="M1.800 7.800h15.500v9.500H1.800z" stroke="#222" strokeWidth="1.600" fill="#8a8a86" />
              <path d="M18 10h3v5h-3z" fill="#222" />
              <path d="M6 0L3 8h4l-2 6 6-8H7l2-6z" fill="#222" stroke="#d9dbd6" />
            </Svg>
          </TraySlot>
          <ClockDate>2023/12/5</ClockDate>
        </Tray>
      </Taskbar>
    </Page>
  );
}
